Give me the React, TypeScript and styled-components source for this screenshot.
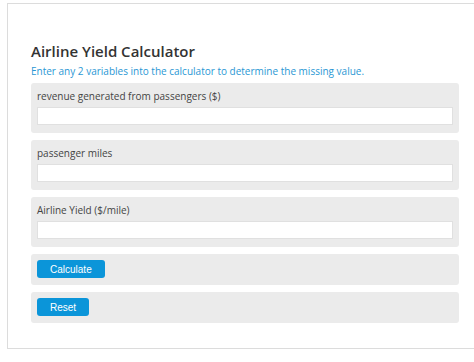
import styled, { createGlobalStyle } from 'styled-components'

const GlobalStyle = createGlobalStyle`
  body {
    margin: 0;
    background: #fff;
    font-family: 'Open Sans', 'Liberation Sans', sans-serif;
  }
`

const fields = [
  'revenue generated from passengers ($)',
  'passenger miles',
  'Airline Yield ($/mile)',
]

export default function App() {
  return (
    <>
      <GlobalStyle />
      <Card>
        <Title>Airline Yield Calculator</Title>
        <Intro>Enter any 2 variables into the calculator to determine the missing value.</Intro>
        <Form>
          {fields.map((label) => (
            <Field key={label}>
              <Label>{label}</Label>
              <Input type='text' />
            </Field>
          ))}
          <Field $compact>
            <Button type='button'>Calculate</Button>
          </Field>
          <Field $compact>
            <Button type='button'>Reset</Button>
          </Field>
        </Form>
      </Card>
    </>
  )
}

const Card = styled.div`
  margin: 3px 0 0 7px;
  box-sizing: border-box;
  border: 1px solid #dcdcdc;
  border-right: none;
  padding: 37px 0 25px 23px;
`

const Title = styled.h1`
  margin: 0;
  font-size: 15px;
  font-weight: 600;
  color: #333;
  line-height: 20px;
`

const Intro = styled.p`
  margin: 3px 0 4px;
  font-size: 10px;
  color: #2a97d4;
  line-height: 15px;
`

const Form = styled.div`
  width: 428px;
  display: flex;
  flex-direction: column;
  gap: 7px;
`

const Field = styled.div<{ $compact?: boolean }>`
  background: #ebebeb;
  border-radius: 3px;
  padding: ${({ $compact }) => ($compact ? '6px 6px 7px' : '6px 6px 8px')};
  display: flex;
  flex-direction: column;
  align-items: flex-start;
`

const Label = styled.label`
  font-size: 10px;
  color: #444;
  line-height: 15px;
  margin: 0 0 3px;
`

const Input = styled.input`
  box-sizing: border-box;
  width: 100%;
  height: 18px;
  margin: 0;
  border: 1px solid #e0e0e0;
  background: #fff;
  outline: none;
`

const Button = styled.button`
  height: 18px;
  padding: 0 13px;
  border: none;
  border-radius: 3px;
  background: #0b95d9;
  color: #fff;
  font-family: 'Liberation Sans', Arial, sans-serif;
  font-size: 10px;
  cursor: pointer;
`
